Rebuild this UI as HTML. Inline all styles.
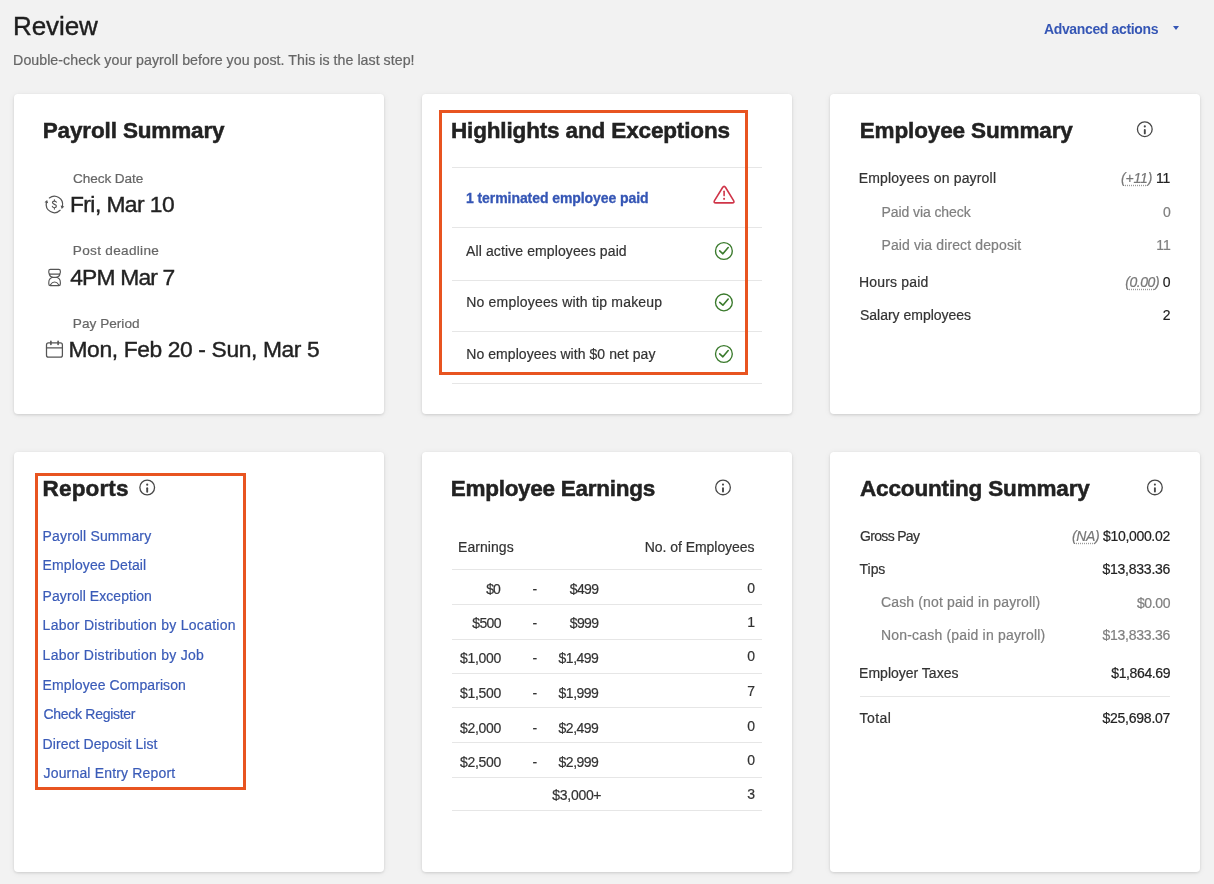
<!DOCTYPE html>
<html><head><meta charset="utf-8"><title>Review</title>
<style>
html,body{margin:0;padding:0}
body{width:1214px;height:884px;overflow:hidden;background:#f2f2f2;position:relative;font-family:"Liberation Sans",sans-serif}
#root{position:absolute;left:0;top:0;width:1214px;height:884px;will-change:transform}
.t{position:absolute;white-space:nowrap;line-height:20px}
.card{position:absolute;background:#fff;border-radius:4px;box-shadow:0 1px 3px rgba(0,0,0,0.13),0 1px 7px rgba(0,0,0,0.06)}
.hr{position:absolute;height:1px;background:#e6e6e6}
.it{color:#777}
.ab{text-decoration:underline dotted #999;text-underline-offset:2px}
</style></head><body>
<div id="root">
<div class="t" id="e1" style="left:12.96px;top:16.00px;font-size:26px;letter-spacing:-0.072px;-webkit-text-stroke-width:0.4px;color:#1e1e1e;">Review</div>
<div class="t" id="e2" style="left:13.10px;top:50.00px;font-size:14.2px;letter-spacing:0.042px;-webkit-text-stroke-width:0.2px;color:#666;">Double-check your payroll before you post. This is the last step!</div>
<div class="t" id="e3" style="left:1044.00px;top:19.00px;font-size:14px;font-weight:700;letter-spacing:-0.360px;color:#3556b5;">Advanced actions</div>
<div style="position:absolute;left:1173px;top:26px;width:0;height:0;border-left:3.8px solid transparent;border-right:3.8px solid transparent;border-top:4.6px solid #3556b5"></div>
<div class="card" style="left:14px;top:94px;width:370px;height:320px"></div>
<div class="card" style="left:422px;top:94px;width:370px;height:320px"></div>
<div class="card" style="left:830px;top:94px;width:370px;height:320px"></div>
<div class="card" style="left:14px;top:452px;width:370px;height:420px"></div>
<div class="card" style="left:422px;top:452px;width:370px;height:420px"></div>
<div class="card" style="left:830px;top:452px;width:370px;height:420px"></div>
<div class="t" id="e4" style="left:42.72px;top:121.00px;font-size:22.5px;font-weight:700;letter-spacing:-0.141px;-webkit-text-stroke-width:0.5px;color:#222;">Payroll Summary</div>
<div class="t" id="e5" style="left:73.12px;top:169.00px;font-size:13.6px;letter-spacing:-0.100px;-webkit-text-stroke-width:0.2px;color:#666;">Check Date</div>
<div class="t" id="e6" style="left:69.98px;top:194.00px;font-size:22.8px;letter-spacing:-0.558px;-webkit-text-stroke-width:0.4px;color:#222;">Fri, Mar 10</div>
<div class="t" id="e7" style="left:72.86px;top:241.00px;font-size:13.6px;letter-spacing:0.300px;-webkit-text-stroke-width:0.2px;color:#666;">Post deadline</div>
<div class="t" id="e8" style="left:70.26px;top:267.00px;font-size:22.8px;letter-spacing:-0.810px;-webkit-text-stroke-width:0.4px;color:#222;">4PM Mar 7</div>
<div class="t" id="e9" style="left:72.86px;top:314.00px;font-size:13.6px;letter-spacing:0.020px;-webkit-text-stroke-width:0.2px;color:#666;">Pay Period</div>
<div class="t" id="e10" style="left:68.46px;top:339.00px;font-size:22.8px;letter-spacing:-0.368px;-webkit-text-stroke-width:0.4px;color:#222;">Mon, Feb 20 - Sun, Mar 5</div>
<div class="t" id="e11" style="left:450.94px;top:121.00px;font-size:22.5px;font-weight:700;letter-spacing:-0.143px;-webkit-text-stroke-width:0.5px;color:#222;">Highlights and Exceptions</div>
<div class="hr" style="left:452px;top:167px;width:310px"></div>
<div class="hr" style="left:452px;top:227px;width:310px"></div>
<div class="hr" style="left:452px;top:280px;width:310px"></div>
<div class="hr" style="left:452px;top:331px;width:310px"></div>
<div class="hr" style="left:452px;top:383px;width:310px"></div>
<div class="t" id="e12" style="left:466.00px;top:188.00px;font-size:14px;font-weight:700;letter-spacing:-0.072px;-webkit-text-stroke-width:0.3px;color:#3556b5;">1 terminated employee paid</div>
<div class="t" id="e13" style="left:466.00px;top:241.00px;font-size:14px;letter-spacing:0.112px;-webkit-text-stroke-width:0.2px;color:#333;">All active employees paid</div>
<div class="t" id="e14" style="left:466.26px;top:292.00px;font-size:14px;letter-spacing:0.193px;-webkit-text-stroke-width:0.2px;color:#333;">No employees with tip makeup</div>
<div class="t" id="e15" style="left:466.26px;top:344.00px;font-size:14px;letter-spacing:0.060px;-webkit-text-stroke-width:0.2px;color:#333;">No employees with $0 net pay</div>
<div style="position:absolute;left:439px;top:110px;width:303px;height:259px;border:3px solid #e85420"></div>
<div class="t" id="e16" style="left:859.68px;top:121.00px;font-size:22.5px;font-weight:700;letter-spacing:-0.132px;-webkit-text-stroke-width:0.5px;color:#222;">Employee Summary</div>
<div class="t" id="e17" style="left:858.72px;top:168.00px;font-size:14px;letter-spacing:0.180px;-webkit-text-stroke-width:0.2px;color:#333;">Employees on payroll</div>
<div class="t" id="e18" style="left:881.48px;top:202.00px;font-size:14px;letter-spacing:-0.083px;-webkit-text-stroke-width:0.2px;color:#7f7f7f;">Paid via check</div>
<div class="t" id="e19" style="left:881.48px;top:235.00px;font-size:14px;letter-spacing:0.123px;-webkit-text-stroke-width:0.2px;color:#7f7f7f;">Paid via direct deposit</div>
<div class="t" id="e20" style="left:859.10px;top:272.00px;font-size:14px;letter-spacing:0.160px;-webkit-text-stroke-width:0.2px;color:#333;">Hours paid</div>
<div class="t" id="e21" style="left:860.00px;top:305.00px;font-size:14px;letter-spacing:-0.012px;-webkit-text-stroke-width:0.2px;color:#333;">Salary employees</div>
<div class="t" id="e22" style="right:43.88px;top:168.00px;font-size:14px;letter-spacing:-0.154px;-webkit-text-stroke-width:0.2px;color:#222;"><i class="it">(<span class="ab">+11</span>)</i> 11</div>
<div class="t" id="e23" style="right:43.12px;top:202.00px;font-size:14px;-webkit-text-stroke-width:0.2px;color:#7f7f7f;">0</div>
<div class="t" id="e24" style="right:43.30px;top:235.00px;font-size:14px;-webkit-text-stroke-width:0.2px;color:#7f7f7f;">11</div>
<div class="t" id="e25" style="right:43.88px;top:272.00px;font-size:14px;letter-spacing:-0.411px;-webkit-text-stroke-width:0.2px;color:#222;"><i class="it">(<span class="ab">0.00</span>)</i> 0</div>
<div class="t" id="e26" style="right:43.50px;top:305.00px;font-size:14px;-webkit-text-stroke-width:0.2px;color:#222;">2</div>
<div class="t" id="e27" style="left:42.60px;top:479.00px;font-size:22.5px;font-weight:700;letter-spacing:0.150px;-webkit-text-stroke-width:0.5px;color:#222;">Reports</div>
<div class="t" id="e28" style="left:42.60px;top:526.00px;font-size:14px;letter-spacing:0.141px;-webkit-text-stroke-width:0.2px;color:#3a5bb8;">Payroll Summary</div>
<div class="t" id="e29" style="left:42.60px;top:555.00px;font-size:14px;letter-spacing:0.116px;-webkit-text-stroke-width:0.2px;color:#3a5bb8;">Employee Detail</div>
<div class="t" id="e30" style="left:42.60px;top:586.00px;font-size:14px;letter-spacing:0.067px;-webkit-text-stroke-width:0.2px;color:#3a5bb8;">Payroll Exception</div>
<div class="t" id="e31" style="left:42.60px;top:615.00px;font-size:14px;letter-spacing:0.267px;-webkit-text-stroke-width:0.2px;color:#3a5bb8;">Labor Distribution by Location</div>
<div class="t" id="e32" style="left:42.60px;top:645.00px;font-size:14px;letter-spacing:0.263px;-webkit-text-stroke-width:0.2px;color:#3a5bb8;">Labor Distribution by Job</div>
<div class="t" id="e33" style="left:42.60px;top:675.00px;font-size:14px;letter-spacing:0.090px;-webkit-text-stroke-width:0.2px;color:#3a5bb8;">Employee Comparison</div>
<div class="t" id="e34" style="left:43.50px;top:704.00px;font-size:14px;letter-spacing:-0.291px;-webkit-text-stroke-width:0.2px;color:#3a5bb8;">Check Register</div>
<div class="t" id="e35" style="left:42.60px;top:734.00px;font-size:14px;letter-spacing:0.070px;-webkit-text-stroke-width:0.2px;color:#3a5bb8;">Direct Deposit List</div>
<div class="t" id="e36" style="left:43.50px;top:763.00px;font-size:14px;letter-spacing:0.171px;-webkit-text-stroke-width:0.2px;color:#3a5bb8;">Journal Entry Report</div>
<div style="position:absolute;left:35px;top:473px;width:205px;height:311px;border:3px solid #e85420"></div>
<div class="t" id="e37" style="left:450.72px;top:479.00px;font-size:22.5px;font-weight:700;letter-spacing:-0.270px;-webkit-text-stroke-width:0.5px;color:#222;">Employee Earnings</div>
<div class="t" id="e38" style="left:458.10px;top:537.00px;font-size:14px;letter-spacing:0.051px;-webkit-text-stroke-width:0.2px;color:#333;">Earnings</div>
<div class="t" id="e39" style="right:459.50px;top:537.00px;font-size:14px;letter-spacing:-0.048px;-webkit-text-stroke-width:0.2px;color:#333;">No. of Employees</div>
<div class="hr" style="left:452px;top:569px;width:310px"></div>
<div class="hr" style="left:452px;top:604px;width:310px"></div>
<div class="hr" style="left:452px;top:639px;width:310px"></div>
<div class="hr" style="left:452px;top:673px;width:310px"></div>
<div class="hr" style="left:452px;top:707px;width:310px"></div>
<div class="hr" style="left:452px;top:742px;width:310px"></div>
<div class="hr" style="left:452px;top:777px;width:310px"></div>
<div class="hr" style="left:452px;top:810px;width:310px"></div>
<div class="t" id="e40" style="right:714.04px;top:579.00px;font-size:14px;letter-spacing:-0.900px;-webkit-text-stroke-width:0.2px;color:#333;">$0</div>
<div class="t" id="e41" style="left:532.50px;top:579.00px;font-size:14px;-webkit-text-stroke-width:0.2px;color:#333;">-</div>
<div class="t" id="e42" style="right:615.64px;top:579.00px;font-size:14px;letter-spacing:-0.660px;-webkit-text-stroke-width:0.2px;color:#333;">$499</div>
<div class="t" id="e43" style="right:458.86px;top:578.00px;font-size:14px;-webkit-text-stroke-width:0.2px;color:#333;">0</div>
<div class="t" id="e44" style="right:713.14px;top:613.00px;font-size:14px;letter-spacing:-0.660px;-webkit-text-stroke-width:0.2px;color:#333;">$500</div>
<div class="t" id="e45" style="left:532.50px;top:613.00px;font-size:14px;-webkit-text-stroke-width:0.2px;color:#333;">-</div>
<div class="t" id="e46" style="right:615.64px;top:613.00px;font-size:14px;letter-spacing:-0.660px;-webkit-text-stroke-width:0.2px;color:#333;">$999</div>
<div class="t" id="e47" style="right:458.86px;top:612.00px;font-size:14px;-webkit-text-stroke-width:0.2px;color:#333;">1</div>
<div class="t" id="e48" style="right:713.14px;top:648.00px;font-size:14px;letter-spacing:-0.324px;-webkit-text-stroke-width:0.2px;color:#333;">$1,000</div>
<div class="t" id="e49" style="left:532.50px;top:648.00px;font-size:14px;-webkit-text-stroke-width:0.2px;color:#333;">-</div>
<div class="t" id="e50" style="right:615.64px;top:648.00px;font-size:14px;letter-spacing:-0.504px;-webkit-text-stroke-width:0.2px;color:#333;">$1,499</div>
<div class="t" id="e51" style="right:458.86px;top:646.00px;font-size:14px;-webkit-text-stroke-width:0.2px;color:#333;">0</div>
<div class="t" id="e52" style="right:713.14px;top:683.00px;font-size:14px;letter-spacing:-0.324px;-webkit-text-stroke-width:0.2px;color:#333;">$1,500</div>
<div class="t" id="e53" style="left:532.50px;top:683.00px;font-size:14px;-webkit-text-stroke-width:0.2px;color:#333;">-</div>
<div class="t" id="e54" style="right:615.64px;top:683.00px;font-size:14px;letter-spacing:-0.504px;-webkit-text-stroke-width:0.2px;color:#333;">$1,999</div>
<div class="t" id="e55" style="right:458.86px;top:681.00px;font-size:14px;-webkit-text-stroke-width:0.2px;color:#333;">7</div>
<div class="t" id="e56" style="right:713.14px;top:718.00px;font-size:14px;letter-spacing:-0.324px;-webkit-text-stroke-width:0.2px;color:#333;">$2,000</div>
<div class="t" id="e57" style="left:532.50px;top:718.00px;font-size:14px;-webkit-text-stroke-width:0.2px;color:#333;">-</div>
<div class="t" id="e58" style="right:615.64px;top:718.00px;font-size:14px;letter-spacing:-0.504px;-webkit-text-stroke-width:0.2px;color:#333;">$2,499</div>
<div class="t" id="e59" style="right:458.86px;top:716.00px;font-size:14px;-webkit-text-stroke-width:0.2px;color:#333;">0</div>
<div class="t" id="e60" style="right:713.14px;top:752.00px;font-size:14px;letter-spacing:-0.324px;-webkit-text-stroke-width:0.2px;color:#333;">$2,500</div>
<div class="t" id="e61" style="left:532.50px;top:752.00px;font-size:14px;-webkit-text-stroke-width:0.2px;color:#333;">-</div>
<div class="t" id="e62" style="right:615.64px;top:752.00px;font-size:14px;letter-spacing:-0.504px;-webkit-text-stroke-width:0.2px;color:#333;">$2,999</div>
<div class="t" id="e63" style="right:458.86px;top:750.00px;font-size:14px;-webkit-text-stroke-width:0.2px;color:#333;">0</div>
<div class="t" id="e64" style="right:612.76px;top:785.00px;font-size:14px;letter-spacing:-0.300px;-webkit-text-stroke-width:0.2px;color:#333;">$3,000+</div>
<div class="t" id="e65" style="right:458.86px;top:784.00px;font-size:14px;-webkit-text-stroke-width:0.2px;color:#333;">3</div>
<div class="t" id="e66" style="left:860.00px;top:479.00px;font-size:22.5px;font-weight:700;letter-spacing:-0.159px;-webkit-text-stroke-width:0.5px;color:#222;">Accounting Summary</div>
<div class="t" id="e67" style="left:860.00px;top:526.00px;font-size:14px;letter-spacing:-0.675px;-webkit-text-stroke-width:0.2px;color:#333;">Gross Pay</div>
<div class="t" id="e68" style="left:859.62px;top:559.00px;font-size:14px;letter-spacing:-0.060px;-webkit-text-stroke-width:0.2px;color:#333;">Tips</div>
<div class="t" id="e69" style="left:880.98px;top:592.00px;font-size:14px;letter-spacing:0.144px;-webkit-text-stroke-width:0.2px;color:#7f7f7f;">Cash (not paid in payroll)</div>
<div class="t" id="e70" style="left:880.98px;top:625.00px;font-size:14px;letter-spacing:0.187px;-webkit-text-stroke-width:0.2px;color:#7f7f7f;">Non-cash (paid in payroll)</div>
<div class="t" id="e71" style="left:859.10px;top:663.00px;font-size:14px;-webkit-text-stroke-width:0.2px;color:#333;">Employer Taxes</div>
<div class="t" id="e72" style="left:859.62px;top:708.00px;font-size:14px;letter-spacing:0.405px;-webkit-text-stroke-width:0.2px;color:#333;">Total</div>
<div class="t" id="e73" style="right:44.14px;top:526.00px;font-size:14px;letter-spacing:-0.321px;-webkit-text-stroke-width:0.2px;color:#222;"><i class="it">(<span class="ab">NA</span>)</i> $10,000.02</div>
<div class="t" id="e74" style="right:43.88px;top:559.00px;font-size:14px;letter-spacing:-0.240px;-webkit-text-stroke-width:0.2px;color:#222;">$13,833.36</div>
<div class="t" id="e75" style="right:43.88px;top:593.00px;font-size:14px;letter-spacing:-0.360px;-webkit-text-stroke-width:0.2px;color:#7f7f7f;">$0.00</div>
<div class="t" id="e76" style="right:43.88px;top:625.00px;font-size:14px;letter-spacing:-0.240px;-webkit-text-stroke-width:0.2px;color:#7f7f7f;">$13,833.36</div>
<div class="t" id="e77" style="right:43.88px;top:663.00px;font-size:14px;letter-spacing:-0.383px;-webkit-text-stroke-width:0.2px;color:#222;">$1,864.69</div>
<div class="t" id="e78" style="right:43.88px;top:708.00px;font-size:14px;letter-spacing:-0.240px;-webkit-text-stroke-width:0.2px;color:#222;">$25,698.07</div>
<div class="hr" style="left:860px;top:696px;width:310px"></div>
<svg style="position:absolute;left:0;top:0" width="1214" height="884" viewBox="0 0 1214 884" fill="none"><g stroke="#555" stroke-width="1.25" stroke-linecap="round" stroke-linejoin="round"><path d="M49.35 197.94 A8.2 8.2 0 0 1 62.42 206.10"/><path d="M60.10 210.30 A8.2 8.2 0 0 1 46.38 202.70"/><path d="M56.35 202.20 C56.10 201.40 55.40 201.10 54.40 201.10 C53.30 201.10 52.45 201.70 52.45 202.60 C52.45 204.60 56.40 204.10 56.40 206.10 C56.40 207.10 55.50 207.70 54.40 207.70 C53.40 207.70 52.60 207.20 52.35 206.40 M54.40 199.70 V201.10 M54.40 207.70 V209.10" stroke-width="1.15"/><path stroke-width="1.15" d="M48.8 271 Q48.8 269.4 50.4 269.4 H58.75 Q60.35 269.4 60.35 271 V272.5 Q60.35 274.1 58.75 274.1 H50.4 Q48.8 274.1 48.8 272.5 Z M49.3 274.4 C49.9 276.6 51.5 277.3 53.2 277.3 H56 C57.7 277.3 59.3 276.6 59.9 274.4 M53.2 277.3 C50.6 277.7 48.8 279.5 48.8 282.3 V284 Q48.8 285.6 50.4 285.6 H58.75 Q60.35 285.6 60.35 284 V282.3 C60.35 279.5 58.6 277.7 56 277.3 M50.5 284.7 C51.8 282.7 53.1 282 54.6 282 C56.1 282 57.4 282.7 58.7 284.7"/><rect x="46.5" y="342.9" width="15.9" height="14.3" rx="2"/><path d="M46.5 347.9 H62.4"/><path d="M50.9 341.3 V344.4 M58.1 341.3 V344.4" stroke-width="1.6"/></g><g stroke="#cf3448" stroke-width="1.6" stroke-linecap="round" stroke-linejoin="round"><path d="M722.6 187.5 Q724.1 185.2 725.6 187.5 L733.6 200.6 Q734.8 202.9 732.2 202.9 H715.9 Q713.3 202.9 714.5 200.6 Z"/><path d="M724.1 191.3 V195.6"/><path d="M724.1 198.8 V198.9" stroke-width="1.9"/></g><g stroke="#3a7a2c" stroke-width="1.45" stroke-linecap="round" stroke-linejoin="round"><circle cx="723.9" cy="251.0" r="8.4" stroke-width="1.35"/><path d="M719.70 250.90 L722.90 253.80 L728.20 247.60" stroke-width="1.6"/></g><g stroke="#3a7a2c" stroke-width="1.45" stroke-linecap="round" stroke-linejoin="round"><circle cx="723.9" cy="302.4" r="8.4" stroke-width="1.35"/><path d="M719.70 302.30 L722.90 305.20 L728.20 299.00" stroke-width="1.6"/></g><g stroke="#3a7a2c" stroke-width="1.45" stroke-linecap="round" stroke-linejoin="round"><circle cx="723.9" cy="354.0" r="8.4" stroke-width="1.35"/><path d="M719.70 353.90 L722.90 356.80 L728.20 350.60" stroke-width="1.6"/></g><g stroke="#474747" stroke-linecap="round"><circle cx="1144.8" cy="129.2" r="7.35" stroke-width="1.3"/><path d="M1144.80 129.90 V133.40" stroke-width="1.9"/><path d="M1144.80 126.30 V126.40" stroke-width="2.1"/></g><g stroke="#474747" stroke-linecap="round"><circle cx="147.2" cy="487.5" r="7.35" stroke-width="1.3"/><path d="M147.20 488.20 V491.70" stroke-width="1.9"/><path d="M147.20 484.60 V484.70" stroke-width="2.1"/></g><g stroke="#474747" stroke-linecap="round"><circle cx="723.0" cy="487.4" r="7.35" stroke-width="1.3"/><path d="M723.00 488.10 V491.60" stroke-width="1.9"/><path d="M723.00 484.50 V484.60" stroke-width="2.1"/></g><g stroke="#474747" stroke-linecap="round"><circle cx="1154.9" cy="487.4" r="7.35" stroke-width="1.3"/><path d="M1154.90 488.10 V491.60" stroke-width="1.9"/><path d="M1154.90 484.50 V484.60" stroke-width="2.1"/></g></svg>
<svg style="position:absolute;left:0;top:0" width="1214" height="884" viewBox="0 0 1214 884"><path fill="#555" d="M61.68 208.91 L64.30 206.46 L60.63 205.48 Z M47.12 199.89 L44.50 202.34 L48.17 203.32 Z"/></svg>
</div></body></html>
